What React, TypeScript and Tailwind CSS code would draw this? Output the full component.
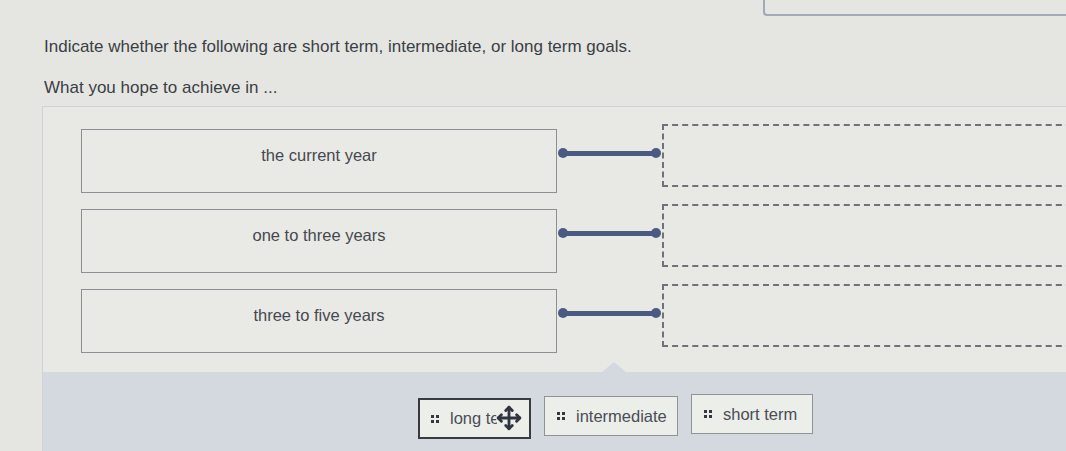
import { Move } from 'lucide-react'

const ROWS = ['the current year', 'one to three years', 'three to five years']
const CHIPS = ['long term', 'intermediate', 'short term']

function Handle() {
  return (
    <span className="grid grid-cols-2 gap-[2px] shrink-0">
      <span className="w-[3px] h-[3px] bg-[#34373e]" />
      <span className="w-[3px] h-[3px] bg-[#34373e]" />
      <span className="w-[3px] h-[3px] bg-[#34373e]" />
      <span className="w-[3px] h-[3px] bg-[#34373e]" />
    </span>
  )
}

function Connector() {
  return (
    <div className="w-[105px] shrink-0 mt-[24px] flex items-center px-[1px]">
      <span className="w-[10px] h-[10px] rounded-full bg-[#4b5a82] shrink-0" />
      <span className="flex-1 h-[5px] bg-[#4b5a82] -mx-[2px]" />
      <span className="w-[10px] h-[10px] rounded-full bg-[#4b5a82] shrink-0" />
    </div>
  )
}

export default function App() {
  return (
    <div
      className="w-[1066px] h-[451px] overflow-hidden bg-[#e5e6e1] text-[#3b3e46]"
      style={{ fontFamily: '"Liberation Sans", Arial, sans-serif' }}
    >
      {/* top right field edge */}
      <div className="flex justify-end">
        <div className="w-[303px] h-[16px] border-l-2 border-b-2 border-[#a3a8ba] rounded-bl-[4px]" />
      </div>

      <p className="pl-[44px] mt-[21px] text-[17px] leading-[20px]">
        Indicate whether the following are short term, intermediate, or long term goals.
      </p>
      <p className="pl-[44px] mt-[21px] text-[17px] leading-[20px]">What you hope to achieve in ...</p>

      {/* question panel */}
      <div className="ml-[42px] mt-[8px] border-t border-l border-[#cfd3d7] bg-[#e8e9e5]">
        <div className="pl-[38px] pt-[17px] pb-[19px] flex flex-col gap-[11px]">
          {ROWS.map((label) => (
            <div key={label} className="flex items-start h-[69px]">
              <div className="w-[476px] h-[64px] mt-[5px] shrink-0 border border-[#8d8f94] bg-[#e9eae6] flex justify-center pt-[15px] text-[16.5px] leading-[20px] text-[#454850]">
                {label}
              </div>
              <Connector />
              <div className="w-[420px] shrink-0 h-[63px] border-2 border-dashed border-[#6e727b] border-r-0" />
            </div>
          ))}
        </div>

        {/* answer bank */}
        <div className="relative bg-[#d4d9e0] h-[80px] pt-[24px] pl-[375px] flex items-start gap-[13px]">
          <span className="absolute -top-[10px] left-[559px] w-0 h-0 border-l-[12px] border-r-[12px] border-b-[10px] border-l-transparent border-r-transparent border-b-[#d4d9e0]" />
          {CHIPS.map((chip, i) => (
            <div
              key={chip}
              className={
                i === 0
                  ? 'relative h-[41px] w-[113px] mt-[2px] flex items-center gap-[11px] pl-[11px] bg-[#eceeea] border-2 border-[#3a3b3f] text-[16.5px] text-[#4a4d55]'
                  : 'h-[40px] flex items-center gap-[11px] pl-[12px] pr-[8px] bg-[#eceeea] border border-[#8f9296] text-[16.5px] text-[#4a4d55]'
              }
              style={i === 1 ? { width: 134 } : i === 2 ? { width: 122, marginTop: -2 } : undefined}
            >
              <Handle />
              <span className="whitespace-nowrap">{chip}</span>
              {i === 0 && (
                <span className="absolute left-[76px] top-[5px] text-[#2f3440] bg-[#eceeea] rounded-full">
                  <Move size={26} strokeWidth={2.6} />
                </span>
              )}
            </div>
          ))}
        </div>
      </div>
    </div>
  )
}
